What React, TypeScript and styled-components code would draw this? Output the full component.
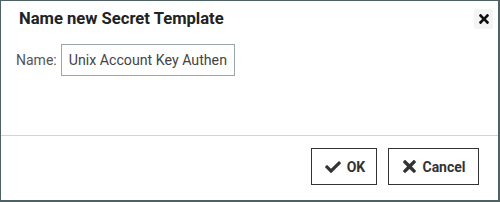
import React from "react";
import styled, {createGlobalStyle} from "styled-components";

const GlobalStyle = createGlobalStyle`
  html, body {
    margin: 0;
    padding: 0;
    background: #ffffff;
  }

  * {
    box-sizing: border-box;
  }
`;

const Dialog = styled.div`
  width: 500px;
  height: 202px;
  display: grid;
  grid-template-rows: 1fr auto;
  border-style: solid;
  border-color: #4e6266;
  border-width: 1px 2px 2px 1px;
  background: #ffffff;
  font-family: Roboto, "Liberation Sans", sans-serif;
  color: #222;
`;

const Body = styled.div`
  display: flex;
  flex-direction: column;
  border-bottom: 1px solid #d3d3d3;
`;

const Header = styled.div`
  display: flex;
  align-items: center;
  justify-content: space-between;
  padding: 8px 5px 0 18px;
`;

const Title = styled.h1`
  margin: 0;
  font-size: 16.6px;
  font-weight: 700;
  color: #222;
  line-height: 20px;
`;

const CloseButton = styled.button`
  width: 19px;
  height: 20px;
  padding: 0;
  border: none;
  border-radius: 2px;
  background: #f4f4f4;
  display: flex;
  align-items: center;
  justify-content: center;
  color: #111;
`;

const FieldRow = styled.div`
  display: flex;
  align-items: center;
  gap: 4px;
  padding: 15px 0 0 15px;
`;

const Label = styled.label`
  font-size: 14px;
  color: #555;
`;

const TextInput = styled.input`
  width: 174px;
  height: 32px;
  padding: 0 7px;
  border: 1px solid #9aa5ad;
  font-family: Roboto, "Liberation Sans", sans-serif;
  font-size: 14.2px;
  color: #444;
  outline: none;
`;

const Footer = styled.div`
  display: flex;
  justify-content: flex-end;
  gap: 11px;
  padding: 12px 19px 15px 0;
`;

const Button = styled.button<{ $width: number }>`
  width: ${props => props.$width}px;
  height: 37px;
  display: flex;
  align-items: center;
  justify-content: center;
  gap: 6px;
  border: 1px solid #333;
  background: #ffffff;
  font-family: Roboto, "Liberation Sans", sans-serif;
  font-size: 14px;
  font-weight: 700;
  color: #333;
  padding: 0 0 0 2px;
`;

// Font Awesome "times" glyph, cropped to its square bounds
const TimesIcon: React.FC<{ size: number }> = ({size}) => (
    <svg width={size} height={size} viewBox="0 78 352 356" fill="currentColor">
        <path
            d="M242.72 256l100.07-100.07c12.28-12.28 12.28-32.19 0-44.48l-22.24-22.24c-12.28-12.28-32.19-12.28-44.48 0L176 189.28 75.930 89.21c-12.28-12.28-32.19-12.28-44.48 0L9.21 111.45c-12.28 12.28-12.28 32.19 0 44.48L109.28 256 9.21 356.07c-12.28 12.28-12.28 32.19 0 44.48l22.24 22.24c12.28 12.28 32.2 12.28 44.48 0L176 322.72l100.07 100.07c12.28 12.28 32.2 12.28 44.48 0l22.24-22.24c12.28-12.28 12.28-32.19 0-44.48L242.72 256z"/>
    </svg>
);

const CheckIcon: React.FC = () => (
    <svg width="16" height="13" viewBox="0 0 512 420" fill="currentColor">
        <path
            d="M173.9 412.3L7.5 245.9c-10-10-10-26.2 0-36.2l36.2-36.2c10-10 26.2-10 36.2 0L192 285.6 432.1 45.5c10-10 26.2-10 36.2 0l36.2 36.2c10 10 10 26.2 0 36.2L210.1 412.3c-10 10-26.2 10-36.2 0z"/>
    </svg>
);

const App: React.FC = () => {
    return (
        <>
            <GlobalStyle/>
            <Dialog>
                <Body>
                    <Header>
                        <Title>Name new Secret Template</Title>
                        <CloseButton aria-label="Close"><TimesIcon size={10}/></CloseButton>
                    </Header>
                    <FieldRow>
                        <Label htmlFor="template-name">Name:</Label>
                        <TextInput id="template-name" defaultValue="Unix Account Key Authentication"/>
                    </FieldRow>
                </Body>
                <Footer>
                    <Button $width={66}><CheckIcon/>OK</Button>
                    <Button $width={91}><TimesIcon size={13}/>Cancel</Button>
                </Footer>
            </Dialog>
        </>
    );
};

export default App;
